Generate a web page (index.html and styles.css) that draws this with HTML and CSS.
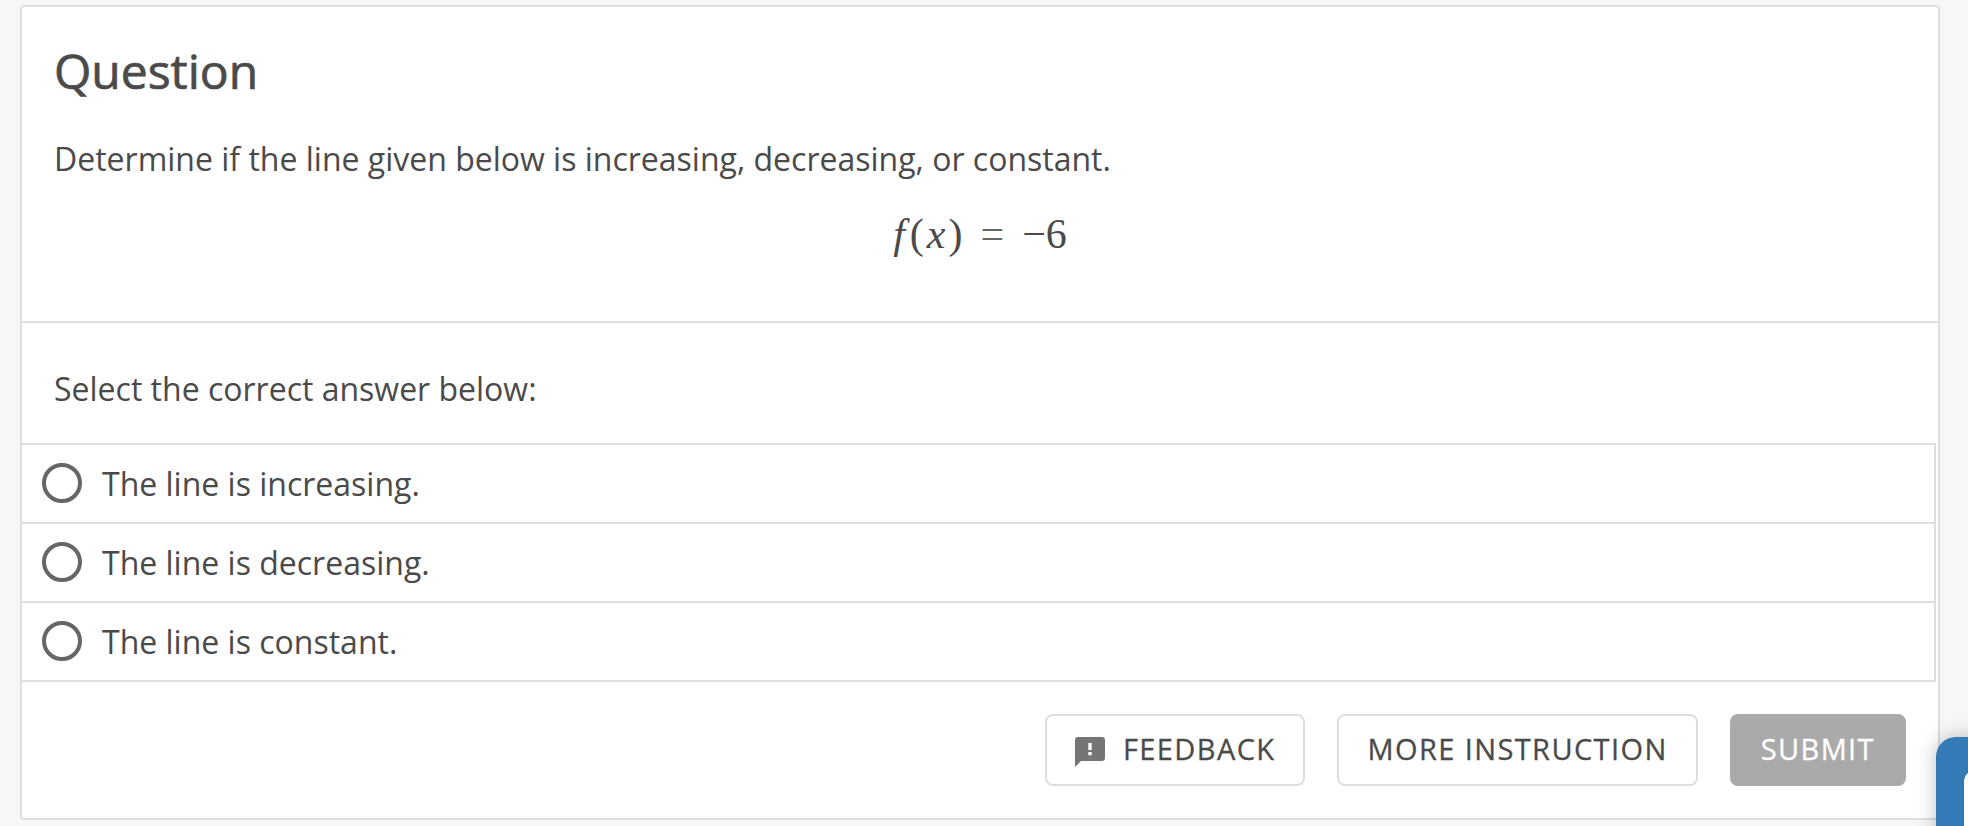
FILE: index.html
```html
<!DOCTYPE html>
<html lang="en">
<head>
    <meta charset="UTF-8">
    <title>Question</title>
    <link rel="stylesheet" href="styles.css">
</head>
<body>
    <div class="question-card">
        <div class="question-body">
            <h1 class="question-title">Question</h1>
            <p class="question-text">Determine if the line given below is increasing, decreasing, or constant.</p>
            <div class="math"><i class="math-f">f</i>(<i class="math-x">x</i>)<span class="math-op">=</span>−6</div>
        </div>

        <div class="answer-prompt">Select the correct answer below:</div>

        <div class="options">
            <label class="option"><span class="radio"></span>The line is increasing.</label>
            <label class="option"><span class="radio"></span>The line is decreasing.</label>
            <label class="option"><span class="radio"></span>The line is constant.</label>
        </div>

        <div class="actions">
            <button class="btn">
                <!-- feedback bubble -->
                <svg class="btn-icon" viewBox="0 0 30 30" width="30" height="30">
                    <path fill="#757575" d="M3 0h24a3 3 0 0 1 3 3v18a3 3 0 0 1-3 3H6l-6 6V3a3 3 0 0 1 3-3z"/>
                    <path fill="#fff" d="M13.300 6h3.400v7h-3.400zM13.300 15h3.400v3.300h-3.400z"/>
                </svg>
                FEEDBACK
            </button>
            <button class="btn">MORE INSTRUCTION</button>
            <button class="btn btn-submit">SUBMIT</button>
        </div>
    </div>

    <div class="chat-tab"><div class="chat-tab-inner"></div></div>
</body>
</html>
```

FILE: styles.css
```css
* {
    margin: 0;
    padding: 0;
    box-sizing: border-box;
}

body {
    background: #f7f7f7;
    font-family: 'Open Sans', 'Noto Sans', sans-serif;
    color: #4a4a4a;
    height: 826px;
    overflow: hidden;
    padding: 5px 28px 0 20px;
    position: relative;
}

.question-card {
    background: #fff;
    border: 2px solid #dedede;
    border-radius: 4px;
    height: 815px;
}

.question-body {
    height: 316px;
    padding: 36px 32px 0;
    border-bottom: 2px solid #dedede;
}

.question-title {
    font-size: 48px;
    font-weight: 400;
    line-height: 56px;
    -webkit-text-stroke: 0.7px #4a4a4a;
}

.question-text {
    font-size: 32px;
    line-height: 44px;
    margin-top: 38px;
}

.math {
    font-family: 'Liberation Serif', serif;
    font-size: 42px;
    line-height: 50px;
    text-align: center;
    margin-top: 28px;
}

.math-f {
    margin-right: 5px;
}

.math-x {
    margin: 0 3px;
}

.math-op {
    color: #666;
    margin: 0 18px;
}

.answer-prompt {
    height: 120px;
    padding: 44px 32px 0;
    font-size: 32px;
    line-height: 44px;
}

.options {
    margin-right: 2px;
    border-right: 2px solid #dedede;
    border-top: 2px solid #dedede;
}

.option {
    display: flex;
    align-items: center;
    height: 79px;
    padding: 0 0 1px 20px;
    font-size: 32px;
    border-bottom: 2px solid #dedede;
}

.radio {
    width: 40px;
    height: 40px;
    border: 4px solid #666;
    border-radius: 50%;
    margin-right: 20px;
    flex-shrink: 0;
}

.actions {
    display: flex;
    justify-content: flex-end;
    gap: 32px;
    padding: 32px 32px 0 0;
}

.btn {
    display: flex;
    align-items: center;
    height: 72px;
    padding: 0 28px 3px;
    background: #fff;
    border: 2px solid #dedede;
    border-radius: 8px;
    color: #4a4a4a;
    font-family: inherit;
    font-size: 29px;
    letter-spacing: 1.4px;
    -webkit-text-stroke: 0.3px;
}

.btn-icon {
    margin-right: 18px;
    margin-top: 7px;
}

.btn-submit {
    padding: 0 29px 3px;
    background: #aaa;
    border-color: #aaa;
    color: #fff;
}

.chat-tab {
    position: absolute;
    left: 1936px;
    top: 737px;
    width: 60px;
    height: 120px;
    background: #337ab7;
    border-radius: 20px;
    box-shadow: 0 0 20px rgba(0, 0, 0, 0.25);
}

.chat-tab-inner {
    position: absolute;
    left: 28px;
    top: 33px;
    width: 30px;
    height: 70px;
    background: #fff;
    border-radius: 12px;
}
```
